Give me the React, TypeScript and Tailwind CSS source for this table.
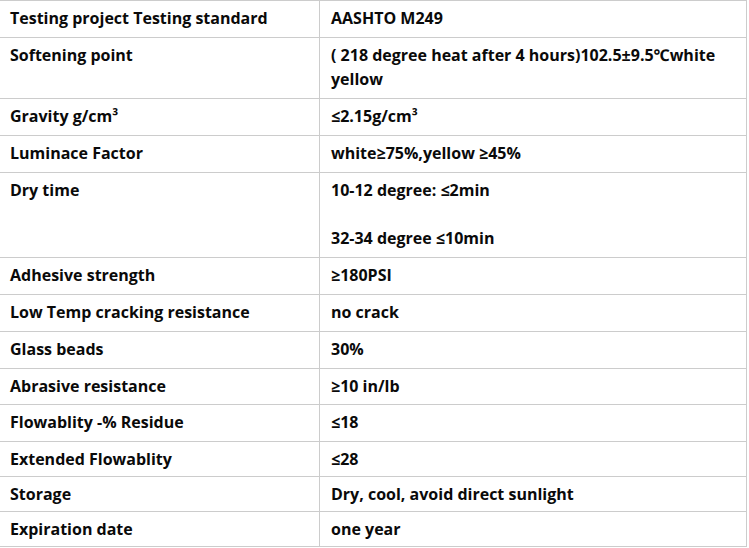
// Spec sheet table: two columns, light grey rules, bold text throughout.
const ROWS: { label: string; value: string[]; h: string }[] = [
  { label: 'Testing project Testing standard', value: ['AASHTO M249'], h: 'h-[37px]' },
  { label: 'Softening point', value: ['( 218 degree heat after 4 hours)102.5±9.5℃white yellow'], h: 'h-[61px]' },
  { label: 'Gravity g/cm³', value: ['≤2.15g/cm³'], h: 'h-[37px]' },
  { label: 'Luminace Factor', value: ['white≥75%,yellow ≥45%'], h: 'h-[37px]' },
  { label: 'Dry time', value: ['10-12 degree: ≤2min', '', '32-34 degree ≤10min'], h: 'h-[85px]' },
  { label: 'Adhesive strength', value: ['≥180PSI'], h: 'h-[37px]' },
  { label: 'Low Temp cracking resistance', value: ['no crack'], h: 'h-[37px]' },
  { label: 'Glass beads', value: ['30%'], h: 'h-[37px]' },
  { label: 'Abrasive resistance', value: ['≥10 in/lb'], h: 'h-[36px]' },
  { label: 'Flowablity -% Residue', value: ['≤18'], h: 'h-[37px]' },
  { label: 'Extended Flowablity', value: ['≤28'], h: 'h-[35px]' },
  { label: 'Storage', value: ['Dry, cool, avoid direct sunlight'], h: 'h-[35px]' },
  { label: 'Expiration date', value: ['one year'], h: 'h-[35px]' },
]

export default function App() {
  return (
    <div className="h-[548px] w-[749px] bg-white font-['Open_Sans','Noto_Sans',sans-serif] text-[16px] font-bold leading-[24px] text-[#0a0a0a]">
      <div className="w-[747px] border-t border-r border-[#cccccc]">
        {ROWS.map((r) => (
          <div key={r.label} className={`flex border-b border-[#cccccc] ${r.h}`}>
            <div className="w-[320px] shrink-0 border-r border-[#cccccc] pl-[10px] pt-[5px]">{r.label}</div>
            <div className="flex-1 pl-[11px] pr-[6px] pt-[5px]">
              {r.value.map((v, i) => (
                <div key={i} className="min-h-[24px]">{v}</div>
              ))}
            </div>
          </div>
        ))}
      </div>
    </div>
  )
}
